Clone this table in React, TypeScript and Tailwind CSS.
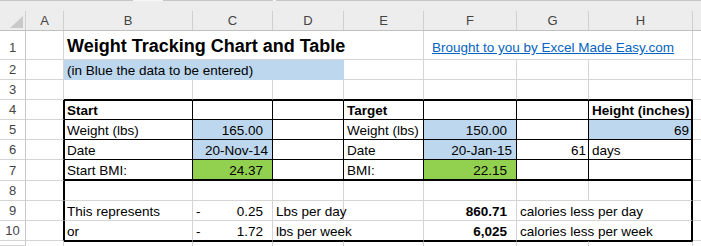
import React from "react";

const GR = "border-r border-r-[#d4d4d4]";
const GB = "border-b border-b-[#d4d4d4]";
const KR = "border-r border-r-black";
const KB = "border-b border-b-black";
const KT = "border-t border-t-black";
const KL = "border-l border-l-black";
const KR2 = "border-r-2 border-r-black";
const KB2 = "border-b-2 border-b-black";

const base =
  "flex items-end whitespace-nowrap pb-px leading-[15px] text-[13.5px] text-black min-w-0";

function Cell({
  cls = "",
  children,
}: {
  cls?: string;
  children?: React.ReactNode;
}) {
  return <div className={base + " " + cls}>{children}</div>;
}

function RH({ n, tall }: { n?: string; tall?: boolean }) {
  return (
    <div
      className={
        "flex items-center justify-center border-r border-b border-r-[#c8c8c8] border-b-[#d4d4d4] bg-white text-[13px] leading-[15px] text-[#444]" +
        (tall ? " pt-[4px]" : "")
      }
    >
      {n}
    </div>
  );
}

function CH({ l, last }: { l: string; last?: boolean }) {
  return (
    <div className="flex flex-col border-b border-b-[#c0c0c0] bg-[#ededed]">
      <div className="h-[10px]" />
      <div
        className={
          "flex flex-1 items-end justify-center pb-[2px] text-[13px] leading-[15px] text-[#444]" +
          (last ? "" : " border-r border-r-[#d0d0d0]")
        }
      >
        {l}
      </div>
    </div>
  );
}

function Corner() {
  return (
    <div className="flex flex-col border-b border-b-[#c0c0c0] bg-[#ededed]">
      <div className="h-[10px]" />
      <div className="flex flex-1 items-end justify-end border-r border-r-[#d0d0d0] pr-[2px] pb-[2px]">
        <svg width="13" height="12" viewBox="0 0 13 12">
          <polygon points="13,0 13,12 0,12" fill="#c9c9c9" />
        </svg>
      </div>
    </div>
  );
}

export default function App() {
  const tbl = `${KR} ${KB}`;
  return (
    <div className="h-[246px] w-[701px] overflow-hidden bg-white font-['Liberation_Sans',Arial,sans-serif]">
      <div className="flex h-px bg-[#ededed]">
        <div className="w-[133px] bg-[#c6c6c6]" />
        <div className="w-[30px] bg-[#f6f6f6]" />
        <div className="w-[110px] bg-[#c6c6c6]" />
        <div className="w-[3px] bg-[#f6f6f6]" />
        <div className="flex-1 bg-[#c6c6c6]" />
      </div>
      <div className="grid grid-cols-[26px_38px_129px_80px_71px_80px_93px_72px_104px_1fr] grid-rows-[30px_29px_20px_20px_20px_20px_20px_21px_20px_20px_20px_5px]">
        {/* header */}
        <Corner />
        <CH l="A" />
        <CH l="B" />
        <CH l="C" />
        <CH l="D" />
        <CH l="E" />
        <CH l="F" />
        <CH l="G" />
        <CH l="H" />
        <CH l="" last />

        {/* row 1 */}
        <RH n="1" tall />
        <Cell cls={`${GR} ${GB}`} />
        <div
          className={`col-span-4 flex items-end whitespace-nowrap pb-[3px] pl-[3px] text-[18px] font-bold leading-[20px] text-black ${GR} ${GB}`}
        >
          Weight Tracking Chart and Table
        </div>
        <div
          className={`col-span-3 flex items-end whitespace-nowrap pb-[4px] pl-[8px] text-[13.5px] leading-[15px] text-[#0563C1] ${GR} ${GB}`}
        >
          <span className="underline">Brought to you by Excel Made Easy.com</span>
        </div>
        <Cell cls={GB} />

        {/* row 2 */}
        <RH n="2" />
        <Cell cls={`${GR} ${GB}`} />
        <Cell cls="col-span-3 border-r border-b border-r-[#BDD7EE] border-b-[#BDD7EE] bg-[#BDD7EE] pl-[3px]">
          (in Blue the data to be entered)
        </Cell>
        <Cell cls={`${GR} ${GB}`} />
        <Cell cls={`${GR} ${GB}`} />
        <Cell cls={`${GR} ${GB}`} />
        <Cell cls={`${GR} ${GB}`} />
        <Cell cls={GB} />

        {/* row 3 */}
        <RH n="3" />
        <Cell cls={`${GR} ${GB}`} />
        <Cell cls={`${GR} ${KB}`} />
        <Cell cls={`${GR} ${KB}`} />
        <Cell cls={`${GR} ${KB}`} />
        <Cell cls={`${GR} ${KB}`} />
        <Cell cls={`${GR} ${KB}`} />
        <Cell cls={`${GR} ${KB}`} />
        <Cell cls={`${GR} ${KB}`} />
        <Cell cls={GB} />

        {/* row 4 */}
        <RH n="4" />
        <Cell cls={`${KR} ${GB}`} />
        <Cell cls={`${KT} ${KL} ${tbl} pl-[2px] font-bold`}>Start</Cell>
        <Cell cls={`${KT} ${tbl}`} />
        <Cell cls={`${KT} ${tbl}`} />
        <Cell cls={`${KT} ${tbl} pl-[3px] font-bold`}>Target</Cell>
        <Cell cls={`${KT} ${tbl}`} />
        <Cell cls={`${KT} ${tbl}`} />
        <Cell cls={`${KT} ${KR2} ${KB} pl-[3px] font-bold`}>Height (inches)</Cell>
        <Cell cls={GB} />

        {/* row 5 */}
        <RH n="5" />
        <Cell cls={`${KR} ${GB}`} />
        <Cell cls={`${KL} ${tbl} pl-[2px]`}>Weight (lbs)</Cell>
        <Cell cls={`${tbl} justify-end bg-[#BDD7EE] pr-[9px]`}>165.00</Cell>
        <Cell cls={tbl} />
        <Cell cls={`${tbl} pl-[3px]`}>Weight (lbs)</Cell>
        <Cell cls={`${tbl} justify-end bg-[#BDD7EE] pr-[9px]`}>150.00</Cell>
        <Cell cls={tbl} />
        <Cell cls={`${KR2} ${KB} justify-end bg-[#BDD7EE] pr-[2px]`}>69</Cell>
        <Cell cls={GB} />

        {/* row 6 */}
        <RH n="6" />
        <Cell cls={`${KR} ${GB}`} />
        <Cell cls={`${KL} ${tbl} pl-[2px]`}>Date</Cell>
        <Cell cls={`${tbl} justify-end bg-[#BDD7EE] pr-[4px]`}>20-Nov-14</Cell>
        <Cell cls={tbl} />
        <Cell cls={`${tbl} pl-[3px]`}>Date</Cell>
        <Cell cls={`${tbl} justify-end bg-[#BDD7EE] pr-[4px]`}>20-Jan-15</Cell>
        <Cell cls={`${tbl} justify-end pr-[2px]`}>61</Cell>
        <Cell cls={`${KR2} ${KB} pl-[3px]`}>days</Cell>
        <Cell cls={GB} />

        {/* row 7 */}
        <RH n="7" />
        <Cell cls={`${KR} ${GB}`} />
        <Cell cls={`${KL} ${KR} ${KB2} pl-[2px]`}>Start BMI:</Cell>
        <Cell cls={`${KR} ${KB2} justify-end bg-[#92D050] pr-[9px]`}>24.37</Cell>
        <Cell cls={`${KR} ${KB2}`} />
        <Cell cls={`${KR} ${KB2} pl-[3px]`}>BMI:</Cell>
        <Cell cls={`${KR} ${KB2} justify-end bg-[#92D050] pr-[9px]`}>22.15</Cell>
        <Cell cls={`${KR} ${KB2}`} />
        <Cell cls={`${KR2} ${KB2}`} />
        <Cell cls={GB} />

        {/* row 8 */}
        <RH n="8" />
        <Cell cls={`${KR} ${GB}`} />
        <Cell cls={`${KL} ${GR} ${GB}`} />
        <Cell cls={`${GR} ${GB}`} />
        <Cell cls={`${GR} ${GB}`} />
        <Cell cls={`${GR} ${GB}`} />
        <Cell cls={`${GR} ${GB}`} />
        <Cell cls={`${GR} ${GB}`} />
        <Cell cls={`${KR2} ${GB}`} />
        <Cell cls={GB} />

        {/* row 9 */}
        <RH n="9" />
        <Cell cls={`${KR} ${GB}`} />
        <Cell cls={`${KL} ${GR} ${GB} pl-[2px]`}>This represents</Cell>
        <Cell cls={`${GR} ${GB} justify-between pl-[3px] pr-[9px]`}>
          <span>-</span>
          <span>0.25</span>
        </Cell>
        <Cell cls={`${GR} ${GB} pl-[3px]`}>Lbs per day</Cell>
        <Cell cls={`${GR} ${GB}`} />
        <Cell cls={`${GR} ${GB} justify-end pr-[9px] font-bold`}>860.71</Cell>
        <Cell cls={`col-span-2 ${KR2} ${GB} pl-[3px]`}>calories less per day</Cell>
        <Cell cls={GB} />

        {/* row 10 */}
        <RH n="10" />
        <Cell cls={`${KR} ${GB}`} />
        <Cell cls={`${KL} ${GR} ${KB} pl-[2px]`}>or</Cell>
        <Cell cls={`${GR} ${KB} justify-between pl-[3px] pr-[9px]`}>
          <span>-</span>
          <span>1.72</span>
        </Cell>
        <Cell cls={`col-span-2 ${GR} ${KB} pl-[3px]`}>lbs per week</Cell>
        <Cell cls={`${GR} ${KB} justify-end pr-[9px] font-bold`}>6,025</Cell>
        <Cell cls={`col-span-2 ${KR2} ${KB} pl-[3px]`}>calories less per week</Cell>
        <Cell cls={GB} />

        {/* row 11 */}
        <RH />
        <Cell cls={GR} />
        <Cell cls={`${KT} ${GR}`} />
        <Cell cls={`${KT} ${GR}`} />
        <Cell cls={`${KT} ${GR}`} />
        <Cell cls={`${KT} ${GR}`} />
        <Cell cls={`${KT} ${GR}`} />
        <Cell cls={`${KT} ${GR}`} />
        <Cell cls={`${KT} ${GR}`} />
        <Cell />
      </div>
    </div>
  );
}
